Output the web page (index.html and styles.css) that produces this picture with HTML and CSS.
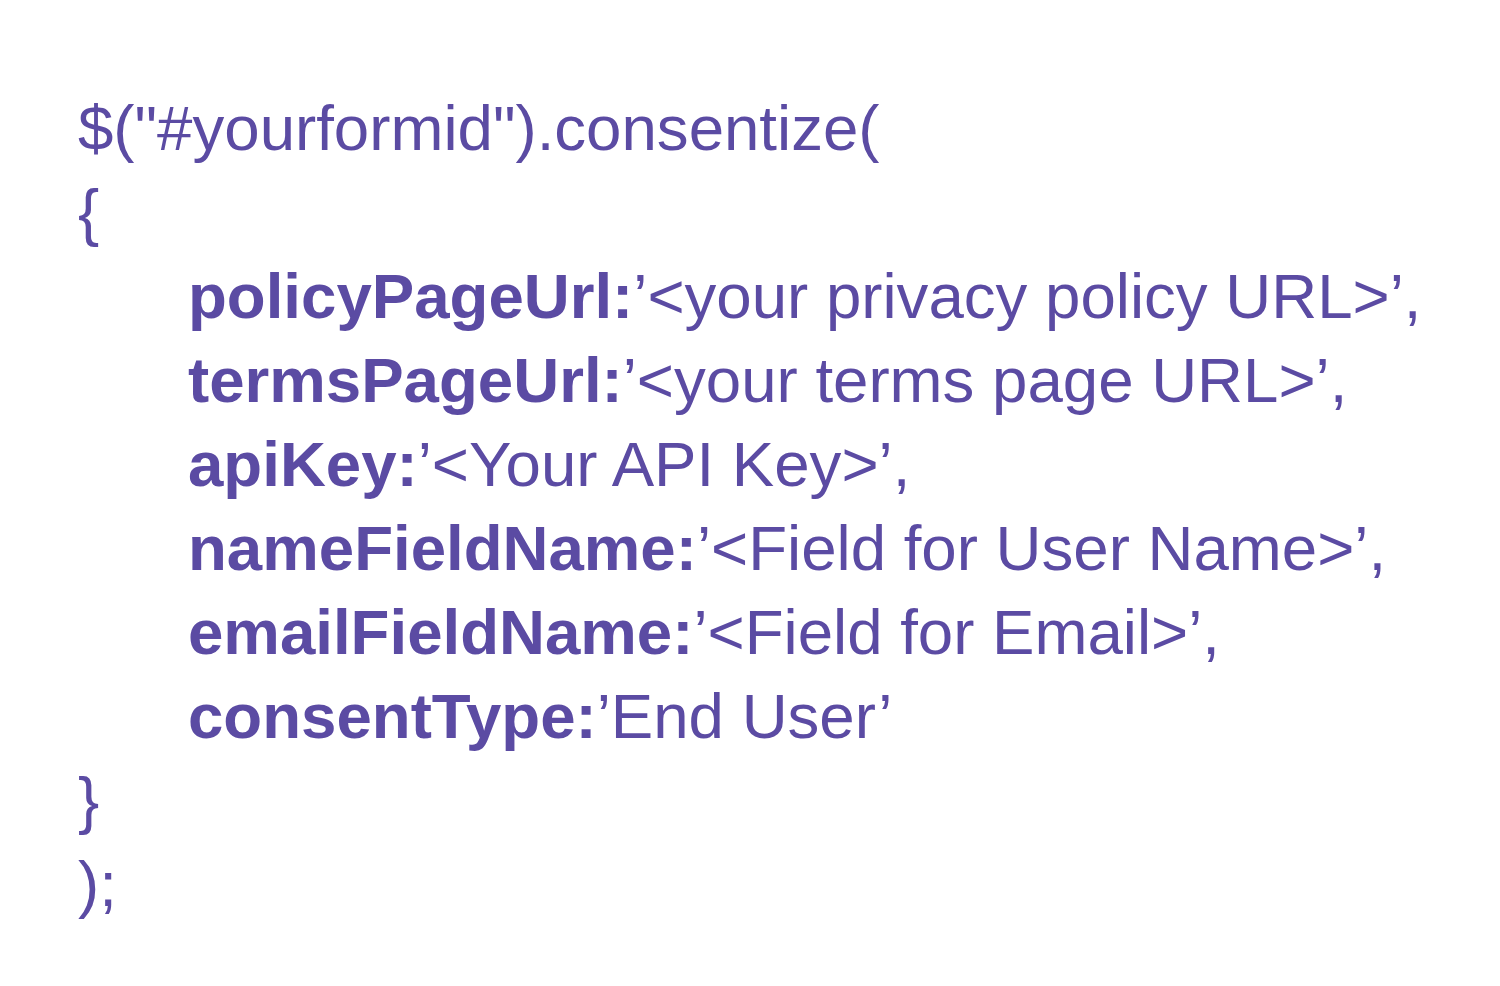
FILE: index.html
```html
<!DOCTYPE html>
<html>
<head>
<meta charset="utf-8">
<link rel="stylesheet" href="styles.css">
</head>
<body>
<div class="code">
  <div class="line">$("#yourformid").consentize(</div>
  <div class="line">{</div>
  <div class="line indent"><b>policyPageUrl:</b>’&lt;your privacy policy URL&gt;’,</div>
  <div class="line indent"><b>termsPageUrl:</b>’&lt;your terms page URL&gt;’,</div>
  <div class="line indent"><b>apiKey:</b>’&lt;Your API Key&gt;’,</div>
  <div class="line indent"><b>nameFieldName:</b>’&lt;Field for User Name&gt;’,</div>
  <div class="line indent"><b>emailFieldName:</b>’&lt;Field for Email&gt;’,</div>
  <div class="line indent"><b>consentType:</b>’End User’</div>
  <div class="line">}</div>
  <div class="line">);</div>
</div>
</body>
</html>
```
FILE: styles.css
```css
html, body {
  margin: 0;
  padding: 0;
  background: #ffffff;
}
.code {
  padding: 86px 0 0 78px;
  font-family: "Liberation Sans", Arial, sans-serif;
  font-size: 63.6px;
  line-height: 84px;
  color: #5b4ba3;
  white-space: nowrap;
}
.line b {
  font-weight: 700;
}
.indent {
  padding-left: 110px;
}
```
